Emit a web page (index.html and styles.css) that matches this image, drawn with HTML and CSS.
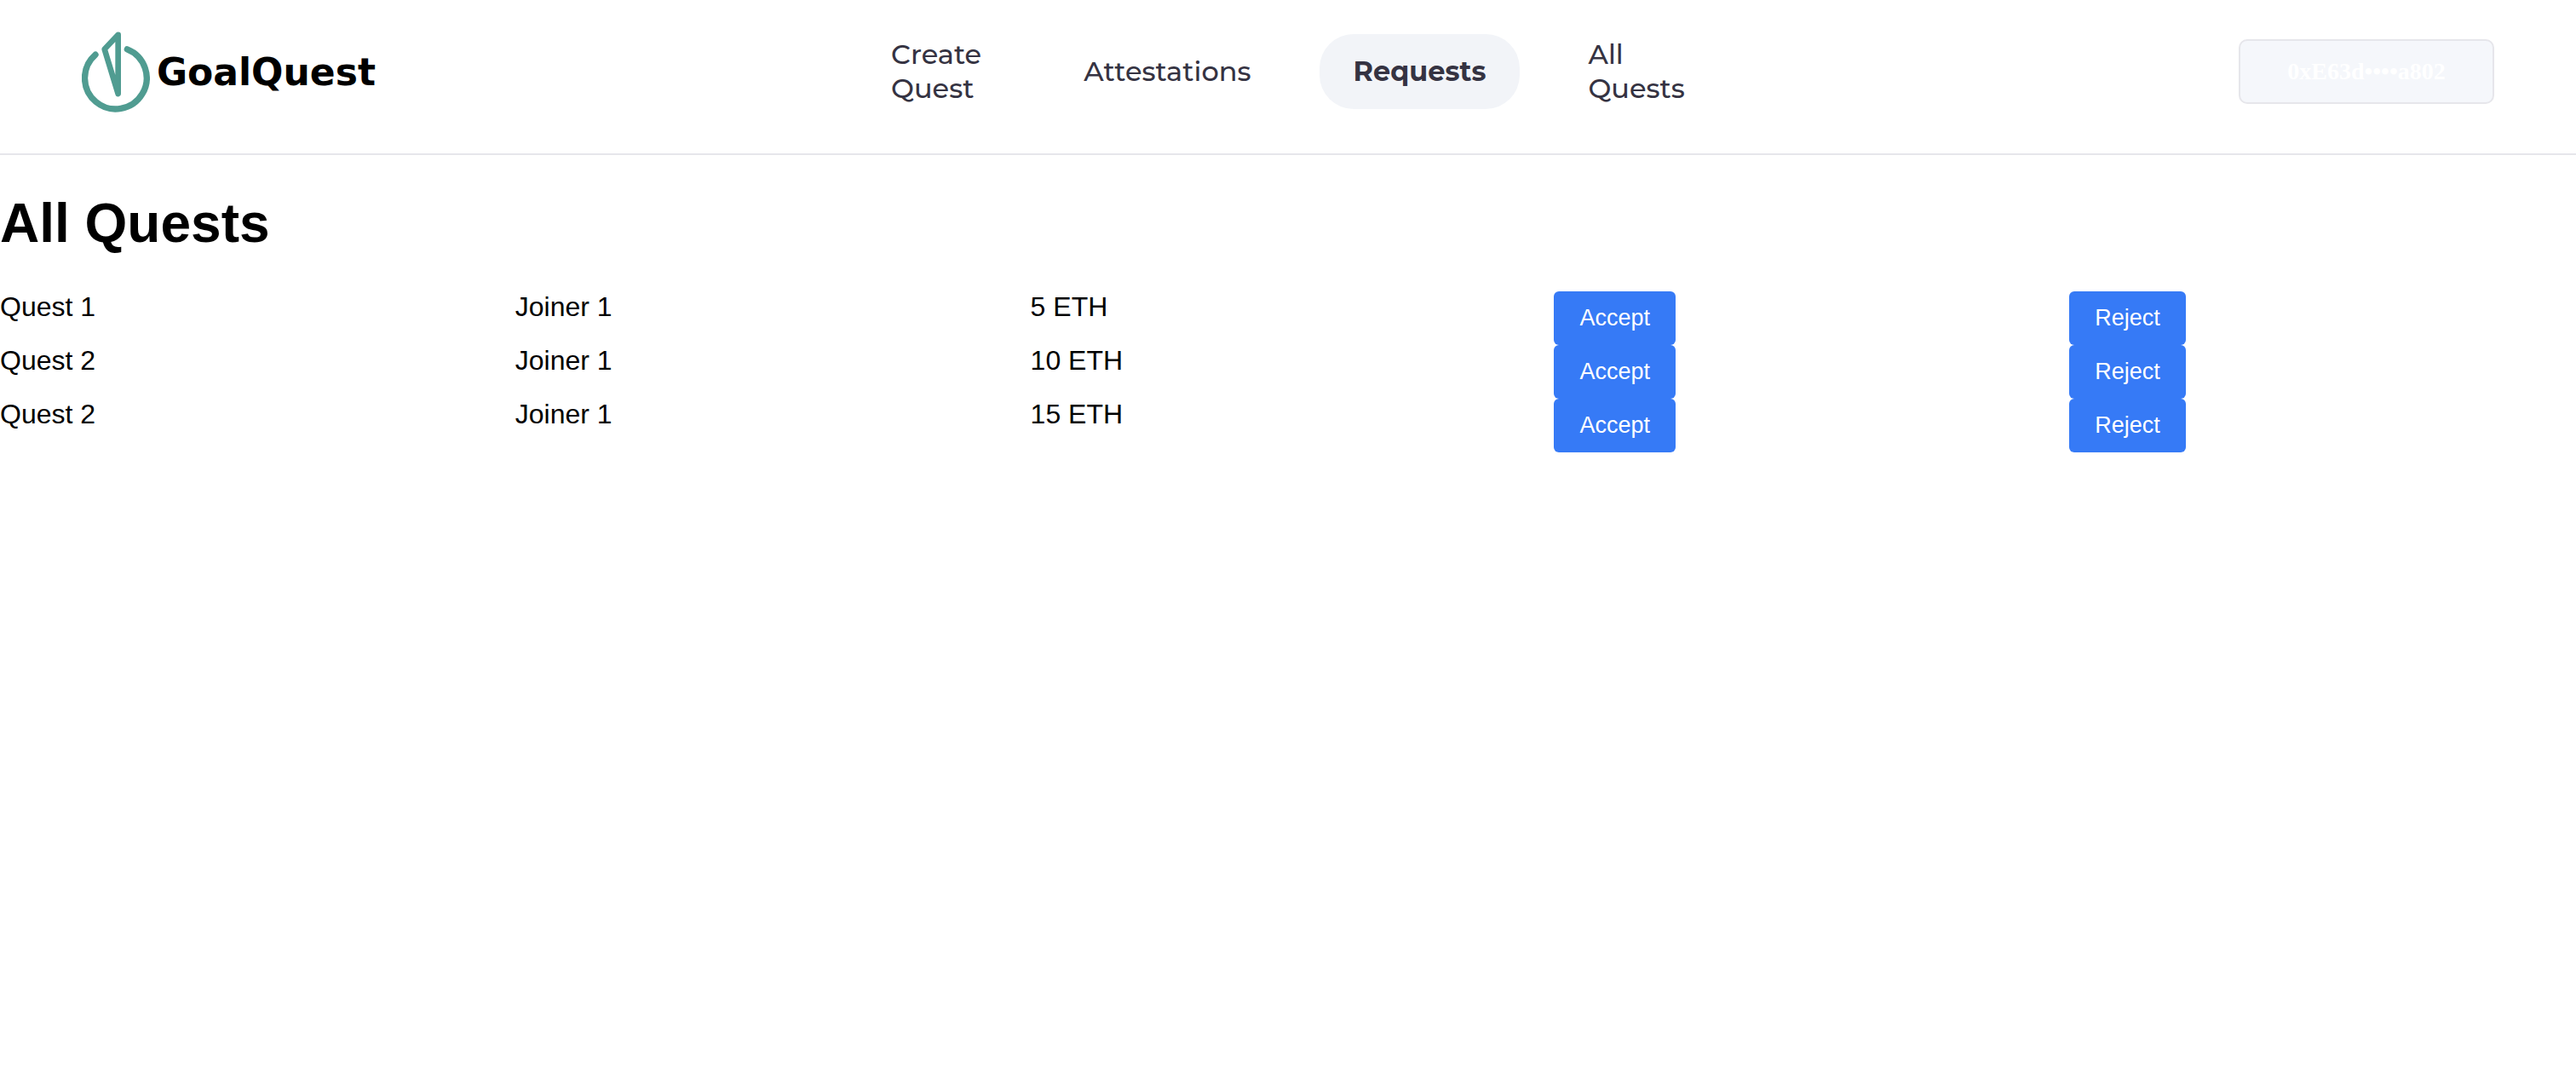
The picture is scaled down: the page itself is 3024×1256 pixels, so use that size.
FILE: index.html
```
<!DOCTYPE html>
<html lang="en">

<head>
    <meta charset="UTF-8">
    <meta name="viewport" content="width=device-width, initial-scale=1.0">
    <title>GoalQuest</title>
    <link rel="stylesheet" href="styles.css">
</head>

<body>

    <header class="header">
        <a class="logo" href="#">
            <svg class="logo-icon" viewBox="48 50 240 284" fill="none" stroke="#509c91" stroke-linecap="round" stroke-linejoin="round" aria-hidden="true">
                <path d="M96 131A109 109 0 1 0 208 112" stroke-width="22" />
                <path d="M176 61L128 112L176 269Z" stroke-width="20" />
            </svg>
            <span class="logo-text">GoalQuest</span>
        </a>

        <nav class="nav">
            <a class="nav-link" href="#">Create<br>Quest</a>
            <a class="nav-link" href="#">Attestations</a>
            <a class="nav-link active" href="#">Requests</a>
            <a class="nav-link" href="#">All<br>Quests</a>
        </nav>

        <button type="button" class="wallet-button">0xE63d••••a802</button>
    </header>

    <main>
        <h1 class="title">All Quests</h1>

        <table class="requests">
            <tbody>
                <tr>
                    <td>Quest 1</td>
                    <td>Joiner 1</td>
                    <td>5 ETH</td>
                    <td><button type="button" class="action-button">Accept</button></td>
                    <td><button type="button" class="action-button">Reject</button></td>
                </tr>
                <tr>
                    <td>Quest 2</td>
                    <td>Joiner 1</td>
                    <td>10 ETH</td>
                    <td><button type="button" class="action-button">Accept</button></td>
                    <td><button type="button" class="action-button">Reject</button></td>
                </tr>
                <tr>
                    <td>Quest 2</td>
                    <td>Joiner 1</td>
                    <td>15 ETH</td>
                    <td><button type="button" class="action-button">Accept</button></td>
                    <td><button type="button" class="action-button">Reject</button></td>
                </tr>
            </tbody>
        </table>
    </main>

</body>

</html>
```
FILE: styles.css
```
/* Basic reset */
* {
    box-sizing: border-box;
    margin: 0;
    padding: 0;
}

body {
    background: #fff;
    color: #000;
    font-family: Helvetica, "Liberation Sans", Arial, sans-serif;
    font-size: 32px;
}

/* Header */
.header {
    display: grid;
    grid-template-columns: 1fr auto 1fr;
    align-items: center;
    padding: 20px 96px 32px;
    border-bottom: 2px solid #e6e6eb;
}

.logo {
    display: flex;
    align-items: center;
    gap: 8px;
    color: #000;
    text-decoration: none;
}

.logo-icon {
    width: 80px;
    height: 95px;
}

.logo-text {
    font-family: "DejaVu Sans", sans-serif;
    font-size: 44px;
    font-weight: bold;
}

/* Navigation */
.nav {
    display: flex;
    align-items: center;
    gap: 40px;
}

.nav-link {
    padding: 24px 40px;
    border-radius: 40px;
    color: #353342;
    font-family: Montserrat, Inter, sans-serif;
    font-size: 32px;
    font-weight: 500;
    line-height: 40px;
    text-decoration: none;
}

.nav-link.active {
    background: #f2f4f8;
    font-weight: 700;
}

.wallet-button {
    justify-self: end;
    width: 300px;
    height: 76px;
    border: 2px solid #e6e6eb;
    border-radius: 10px;
    background: #f5f7fb;
    color: #fff;
    font-family: "Liberation Serif", "Times New Roman", serif;
    font-size: 28px;
    font-weight: bold;
    cursor: pointer;
}

/* Requests list */
.title {
    margin: 43px 0;
    font-size: 64px;
    line-height: 74px;
}

.requests {
    width: 100%;
    table-layout: fixed;
    border-collapse: collapse;
}

.requests td {
    vertical-align: top;
}

.action-button {
    display: block;
    margin: 0 10px;
    padding: 16px 30px;
    border: none;
    border-radius: 6px;
    background: #367af6;
    color: #fff;
    font-family: inherit;
    font-size: 27px;
    line-height: 31px;
    cursor: pointer;
}
```
